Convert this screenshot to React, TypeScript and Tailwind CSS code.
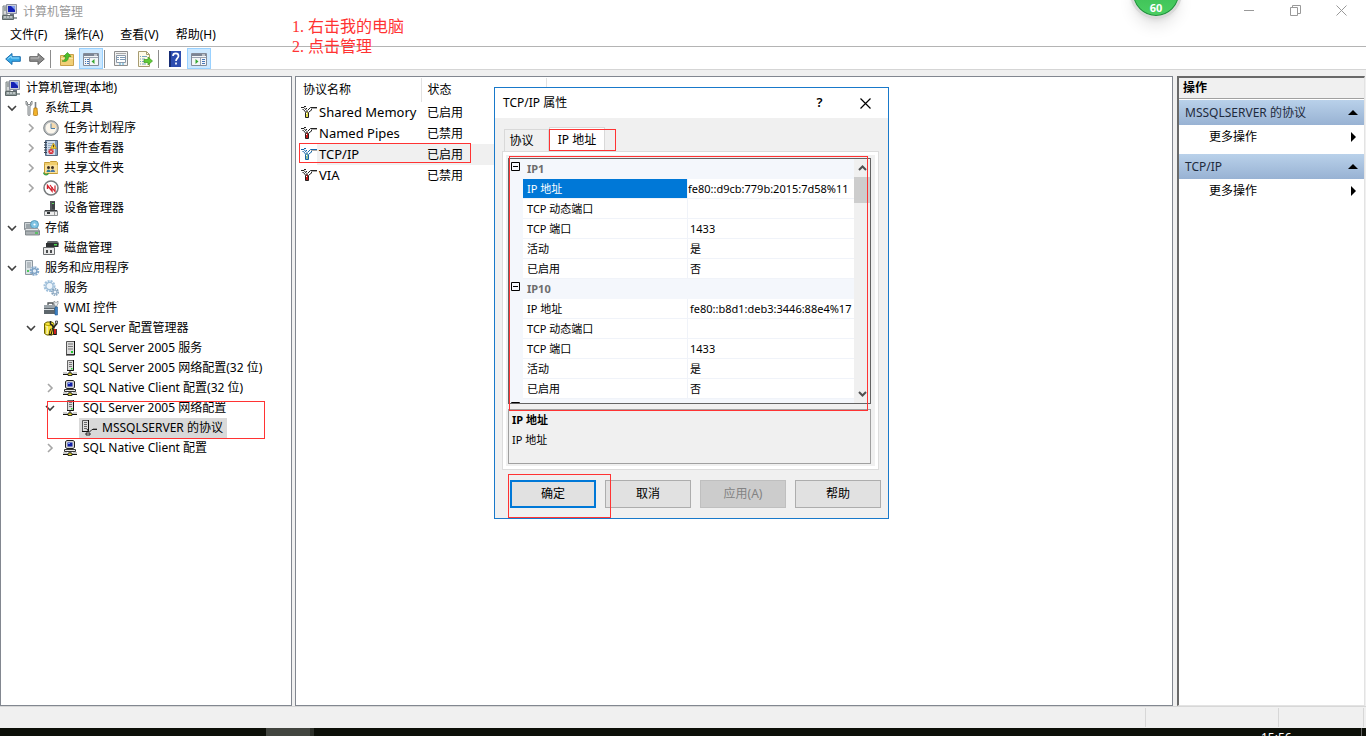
import { Fragment, type ReactNode } from 'react';

type TreeNode = {
  label: string;
  icon: ReactNode;
  state?: 'open' | 'closed';
  selected?: boolean;
  children?: TreeNode[];
};

function Icon({ children }: { children: ReactNode }) {
  return (
    <svg width="16" height="16" viewBox="0 0 16 16" className="shrink-0" aria-hidden="true">
      {children}
    </svg>
  );
}

const ComputerIcon = () => (
  <Icon>
    <path d="M1 2h4v9H1z" fill="#d5d8d8" stroke="#7b8383" />
    <path d="M2 4h2M2 6h2" stroke="#6b7474" />
    <path d="M4.500 .5h10v9h-10z" fill="#c9cdd8" stroke="#8b90a0" />
    <path d="M6 2h7v6H6z" fill="#1420b4" />
    <path d="M9 2h4v4z" fill="#7d9cf0" />
    <path d="M8 10h4v2H8z" fill="#6c7484" />
    <path d="M.5 11.500h11v4H.5z" fill="#8f9a9a" stroke="#5d6868" />
    <path d="M2 13h2M5 13h2M8 13h2" stroke="#e6ecec" />
    <path d="M12 13h3v2h-3z" fill="#9aa4a4" />
  </Icon>
);

const ToolsIcon = () => (
  <Icon>
    <path d="M2 1v3.500L4 6v8.500a1 1 0 0 0 2 0V6l2-1.500V1L6.500 2.500v2h-3v-2z" fill="#e1e4e6" stroke="#75797c" strokeWidth=".9" />
    <path d="M11.500 2v6" stroke="#7b7f82" strokeWidth="1.600" />
    <path d="M10 8h3l.6 6.500a1 1 0 0 1-1 1h-2.200a1 1 0 0 1-1-1z" fill="#f3b32c" stroke="#b07a14" strokeWidth=".8" />
  </Icon>
);

const ClockIcon = () => (
  <Icon>
    <circle cx="8" cy="8" r="7.300" fill="#b9bdbf" stroke="#74797c" strokeWidth=".9" />
    <circle cx="8" cy="8" r="5.500" fill="#fbf6ec" />
    <path d="M8 8V2.500A5.500 5.500 0 0 1 13.500 8z" fill="#f4d9ad" />
    <path d="M8 3.500V8.500h4" fill="none" stroke="#4f7fa8" />
  </Icon>
);

const EventIcon = () => (
  <Icon>
    <path d="M2.500 .5h12v15h-12z" fill="#7f9bbd" stroke="#54677f" />
    <path d="M4 1h8v14H4z" fill="#d0dcea" />
    <path d="M5 3.500h6M5 5.500h6M5 7.500h6M5 9.500h6" stroke="#8aa2be" strokeWidth=".8" />
    <path d="M1 2.500h3M1 5h3M1 7.500h3M1 10h3M1 12.500h3" stroke="#3b4654" />
    <path d="M10.500 3 13.500 8.500H7.500z" fill="#f8cf2d" stroke="#b58b0c" strokeWidth=".6" />
    <path d="M10.500 4.800v2.500" stroke="#222" strokeWidth=".8" />
    <circle cx="8" cy="11.500" r="2.600" fill="#d62b35" />
    <path d="m7 10.500 2 2m0-2-2 2" stroke="#fff" strokeWidth=".8" />
  </Icon>
);

const SharedFolderIcon = () => (
  <Icon>
    <path d="M1.500 3.500v-1h5l1-1h6l1 1v11h-13z" fill="#f0cd6c" stroke="#c59b34" />
    <path d="M2 5h12.500v8H2z" fill="#f9e09a" />
    <circle cx="5.500" cy="7.500" r="1.500" fill="#3e2f24" />
    <circle cx="9.500" cy="7.500" r="1.500" fill="#3e2f24" />
    <path d="M3.500 12c0-3.500 4-3.500 4 0z" fill="#2d7f9e" />
    <path d="M7.500 12c0-3.500 4.500-3.500 4.500 0z" fill="#4a78a8" />
    <path d="M.5 12.500c1 3 4 3 5 .5" fill="none" stroke="#43a047" strokeWidth="1.500" />
  </Icon>
);

const PerformanceIcon = () => (
  <Icon>
    <circle cx="8" cy="8" r="7" fill="#fff" stroke="#777b7d" strokeWidth="1.500" />
    <path d="M4.500 9V5.500L9 11V7" fill="none" stroke="#d3232e" strokeWidth="1.400" />
    <path d="M7 5l5 6.500V5.500" fill="none" stroke="#d3232e" strokeWidth="1.200" />
  </Icon>
);

const DeviceIcon = () => (
  <Icon>
    <path d="M7 1h5v9H7z" fill="#53585b" />
    <path d="M9 2h3v7H9z" fill="#3d4144" />
    <path d="M9 3h2v1H9z" fill="#5cd65c" />
    <path d="M2 10h12l1 2H1z" fill="#3a3c3e" />
    <path d="M1.500 11.500h13v4h-13z" fill="#ededed" stroke="#8b8e90" />
    <path d="M4 12h3v2H4z" fill="#2d3032" />
    <path d="M11 12h1v3h-1z" fill="#999" />
  </Icon>
);

const StorageIcon = () => (
  <Icon>
    <path d="M.5 2.500h9v7h-9z" fill="#cdd3d6" stroke="#878f94" />
    <path d="M2 4h5v4H2z" fill="#9ca5aa" />
    <circle cx="10.500" cy="4.500" r="4" fill="#7fc4e4" stroke="#4990b2" strokeWidth=".8" />
    <circle cx="10.500" cy="4.500" r="1.100" fill="#fff" />
    <path d="M1 8.500h13l1.500 2.500h-14z" fill="#e5e8e9" stroke="#8b9195" strokeWidth=".8" />
    <path d="M1.500 11h14v4h-14z" fill="#a9afb2" stroke="#6f777b" strokeWidth=".8" />
    <path d="M11 13h3" stroke="#3cc648" strokeWidth="1.400" />
  </Icon>
);

const DiskIcon = () => (
  <Icon>
    <path d="m4 2 1-1h9l1.500 1v3H4z" fill="#65696c" />
    <path d="M3 3h12.500v4H3z" fill="#2e3133" />
    <path d="M11 4h3v1.500h-3z" fill="#4ad64f" />
    <path d="M.5 7.500h11v7H.5z" fill="#e9e9e9" stroke="#6b6e70" />
    <path d="M3 10h2v3H3zM7 10h2v3H7z" fill="#4b4e50" />
  </Icon>
);

const ServicesAppsIcon = () => (
  <Icon>
    <path d="M1.500 .5h7v14h-7z" fill="#dbe1e5" stroke="#8d979e" />
    <path d="M3 3h4M3 5h4M3 7h4" stroke="#8d979e" />
    <path d="M3 10h2v2H3z" fill="#4dc95a" />
    <circle cx="10.500" cy="11" r="3.800" fill="none" stroke="#84a9cc" strokeWidth="2" strokeDasharray="2 .9" />
    <circle cx="10.500" cy="11" r="2.400" fill="#e3eef7" stroke="#7a9fc3" strokeWidth="1.200" />
  </Icon>
);

const GearsIcon = () => (
  <Icon>
    <circle cx="6.500" cy="6" r="5" fill="none" stroke="#9fc0dc" strokeWidth="2" strokeDasharray="2 1" />
    <circle cx="6.500" cy="6" r="3.600" fill="#eef5fb" stroke="#9cbcd6" strokeWidth="1.300" />
    <circle cx="12" cy="12" r="3.200" fill="none" stroke="#86a5bf" strokeWidth="1.600" strokeDasharray="1.600 .8" />
    <circle cx="12" cy="12" r="2" fill="#eef5fb" stroke="#7c9cb8" />
  </Icon>
);

const WmiIcon = () => (
  <Icon>
    <path d="M5 5V3h5v2" fill="none" stroke="#4e5356" strokeWidth="1.300" />
    <path d="M1 5h13v9H1z" fill="#5d666c" />
    <path d="M1 5h13v3H1z" fill="#9aa3a9" />
    <path d="M1 9h10v1H1z" fill="#d8dde0" />
    <path d="M11 1v3l1 1v1.500h2V5l1-1V1l-1.200 1.200h-1.600z" fill="#e7eaec" stroke="#777d80" strokeWidth=".6" />
    <path d="M12 7h2.500v8H12z" fill="#3e82c4" stroke="#235a92" strokeWidth=".6" />
  </Icon>
);

const SqlConfigIcon = () => (
  <Icon>
    <path d="M1.500 3.500 4 2h5l2 1.500v10L9 15H4l-2.500-1.500z" fill="#f7e53b" stroke="#6a6200" />
    <path d="M2 4.500c3 1.500 5 1.500 8 0M3 7v6" fill="none" stroke="#b0a20a" />
    <path d="M4 6v8" stroke="#fff" />
    <path d="M7.500 1v3l1.500 1M9 5l2 3" fill="none" stroke="#222" strokeWidth="1.500" />
    <path d="M14 3.500 11 7l-2 2" stroke="#222" strokeWidth="1.600" />
    <path d="M8.500 9 7 15" stroke="#111" strokeWidth="3" />
    <path d="M8.500 9 7 14" stroke="#e8c020" strokeWidth="1.200" />
    <path d="M12 9v6" stroke="#111" strokeWidth="3.600" />
    <path d="M12 9v5" stroke="#e02222" strokeWidth="1.800" />
    <path d="M12.500 1h2v2.500h-2z" fill="#ccc" stroke="#222" strokeWidth=".7" />
  </Icon>
);

const ServerIcon = () => (
  <Icon>
    <path d="M4.500 1.500h8v13h-8z" fill="#dcdcdc" stroke="#555" />
    <path d="M12.500 1v14H4" fill="none" stroke="#111" />
    <path d="M6 4h5M6 6.500h5M6 9h5" stroke="#777" />
    <path d="M9 11h2v2H9z" fill="#1ecb2c" />
  </Icon>
);

const NetServerIcon = () => (
  <Icon>
    <path d="M5.500 .5h6v10h-6z" fill="#dcdcdc" stroke="#666" />
    <path d="M11.500 0v10.500H5" fill="none" stroke="#111" />
    <path d="M7 2.500h3M7 4.500h3M7 6.500h3" stroke="#777" />
    <path d="M9 8h1.500v1.500H9z" fill="#1ecb2c" />
    <path d="M8 11v2M1 14.500h14" stroke="#111" />
    <path d="M1 13h4M11 13h4" stroke="#999" />
    <path d="M6 13h4v2.500H6z" fill="#e8de3a" stroke="#111" strokeWidth=".8" />
  </Icon>
);

const ClientIcon = () => (
  <Icon>
    <path d="M3.500 1.500 5 .5h6l1.500 1v6l-1.500 1H5l-1.500-1z" fill="#d5d5d5" stroke="#222" />
    <path d="M5.500 2.500h5v4h-5z" fill="#1220a8" />
    <path d="M6 3.500h2" stroke="#7fa2ff" />
    <path d="M2.500 9.500h11v2h-11z" fill="#ececec" stroke="#222" strokeWidth=".9" />
    <path d="M8 12v1M1 14.500h14" stroke="#111" />
    <path d="M1 13h4M11 13h4" stroke="#999" />
    <path d="M6 13h4v2.500H6z" fill="#e8de3a" stroke="#111" strokeWidth=".8" />
  </Icon>
);

const ServerProtocolIcon = () => (
  <Icon>
    <path d="M1.500 .5h6v11h-6z" fill="#dcdcdc" stroke="#555" />
    <path d="M7.500 0v11.500H1" fill="none" stroke="#111" />
    <path d="M3 2.500h3M3 4.500h3M3 6.500h3M3 8.500h3" stroke="#666" />
    <path d="M5 13h4v2H5z" fill="#ddd" stroke="#222" />
    <path d="m6 9 2 3M16 9.500h-5L8.500 12" fill="none" stroke="#222" />
    <path d="M12 8.500h4" stroke="#999" />
  </Icon>
);

function ProtocolIcon({ tone, lamp }: { tone: string; lamp: string }) {
  return (
    <Icon>
      <path d="M0 2.500h3l2.500 3M16 2.500H9.500L6.500 5.500M1.500 4.500h1l2 2.500M10 4.500h1L8 7" fill="none" stroke={tone} />
      <path d="M3 1.500h2M5 3.500h1" stroke={tone} />
      <path d="M10 3.500h6" stroke="#aaa" />
      <path d="M4.500 7.500 6 6.500l1.500 1v5h-3z" fill={lamp} stroke={tone} />
      <path d="M5 8.500h1" stroke="#fff" />
    </Icon>
  );
}

function Chevron({ open }: { open: boolean }) {
  return (
    <svg width="10" height="10" viewBox="0 0 10 10" fill="none" aria-hidden="true">
      {open ? (
        <path d="m1 3 4 4 4-4" stroke="#404040" strokeWidth="1.600" />
      ) : (
        <path d="m3 1 4 4-4 4" stroke="#a6a6a6" strokeWidth="1.600" />
      )}
    </svg>
  );
}

const tree: TreeNode[] = [
  {
    label: '系统工具',
    icon: <ToolsIcon />,
    state: 'open',
    children: [
      { label: '任务计划程序', icon: <ClockIcon />, state: 'closed' },
      { label: '事件查看器', icon: <EventIcon />, state: 'closed' },
      { label: '共享文件夹', icon: <SharedFolderIcon />, state: 'closed' },
      { label: '性能', icon: <PerformanceIcon />, state: 'closed' },
      { label: '设备管理器', icon: <DeviceIcon /> },
    ],
  },
  {
    label: '存储',
    icon: <StorageIcon />,
    state: 'open',
    children: [{ label: '磁盘管理', icon: <DiskIcon /> }],
  },
  {
    label: '服务和应用程序',
    icon: <ServicesAppsIcon />,
    state: 'open',
    children: [
      { label: '服务', icon: <GearsIcon /> },
      { label: 'WMI 控件', icon: <WmiIcon /> },
      {
        label: 'SQL Server 配置管理器',
        icon: <SqlConfigIcon />,
        state: 'open',
        children: [
          { label: 'SQL Server 2005 服务', icon: <ServerIcon /> },
          { label: 'SQL Server 2005 网络配置(32 位)', icon: <NetServerIcon /> },
          { label: 'SQL Native Client 配置(32 位)', icon: <ClientIcon />, state: 'closed' },
          {
            label: 'SQL Server 2005 网络配置',
            icon: <NetServerIcon />,
            state: 'open',
            children: [{ label: 'MSSQLSERVER 的协议', icon: <ServerProtocolIcon />, selected: true }],
          },
          { label: 'SQL Native Client 配置', icon: <ClientIcon />, state: 'closed' },
        ],
      },
    ],
  },
];

const protocols = [
  { name: 'Shared Memory', status: '已启用', lamp: '#e6e04a', tone: '#222' },
  { name: 'Named Pipes', status: '已禁用', lamp: '#c41818', tone: '#222' },
  { name: 'TCP/IP', status: '已启用', lamp: '#8fbf9a', tone: '#1467a8', selected: true },
  { name: 'VIA', status: '已禁用', lamp: '#c41818', tone: '#222' },
];

const addressGroups = [
  {
    name: 'IP1',
    rows: [
      ['IP 地址', 'fe80::d9cb:779b:2015:7d58%11'],
      ['TCP 动态端口', ''],
      ['TCP 端口', '1433'],
      ['活动', '是'],
      ['已启用', '否'],
    ],
  },
  {
    name: 'IP10',
    rows: [
      ['IP 地址', 'fe80::b8d1:deb3:3446:88e4%17'],
      ['TCP 动态端口', ''],
      ['TCP 端口', '1433'],
      ['活动', '是'],
      ['已启用', '否'],
    ],
  },
  { name: '', rows: [] },
];

function TreeList({ nodes, nested }: { nodes: TreeNode[]; nested?: boolean }) {
  return (
    <ul className={nested ? 'pl-[19px]' : ''}>
      {nodes.map((node) => (
        <li key={node.label}>
          <div className="flex h-5 items-center">
            <span className="w-[17px] shrink-0 pl-0.5">
              {node.state && <Chevron open={node.state === 'open'} />}
            </span>
            <span className={`flex h-5 items-center gap-[5px] px-0.5 ${node.selected ? 'bg-[#d9d9d9] pr-1' : ''}`}>
              {node.icon}
              {node.label}
            </span>
          </div>
          {node.children && <TreeList nodes={node.children} nested />}
        </li>
      ))}
    </ul>
  );
}

function TitleBar() {
  return (
    <header className="flex h-6 items-start justify-between bg-white">
      <div className="flex h-6 items-center gap-[5px] pl-0.5 text-[#999]">
        <ComputerIcon />
        计算机管理
      </div>
      <div className="flex pr-0.5">
        <button aria-label="最小化" className="flex h-5 w-[46px] items-center justify-center">
          <svg width="11" height="11" fill="none" stroke="#999"><path d="M0 5.500h10" /></svg>
        </button>
        <button aria-label="还原" className="flex h-5 w-[46px] items-center justify-center">
          <svg width="11" height="11" fill="none" stroke="#999"><path d="M.5 2.500h7v8h-7zM2.500 2.500v-2h8v8h-3" /></svg>
        </button>
        <button aria-label="关闭" className="flex h-5 w-[46px] items-center justify-center">
          <svg width="11" height="11" fill="none" stroke="#999"><path d="m.5 .5 10 10m0-10-10 10" /></svg>
        </button>
      </div>
    </header>
  );
}

function Separator() {
  return <span className="ml-px mr-1 h-[18px] w-px bg-[#8c8c8c]" />;
}

function ToolButton({ label, active, children }: { label: string; active?: boolean; children: ReactNode }) {
  return (
    <button
      aria-label={label}
      className={`flex h-[21px] w-6 items-center justify-center border ${active ? 'border-[#99d1ff] bg-[#cce8ff]' : 'border-transparent'}`}
    >
      <Icon>{children}</Icon>
    </button>
  );
}

function Toolbar() {
  return (
    <div className="flex h-[23px] items-center border-b border-[#d5d5d5] bg-white pl-px pt-px">
      <ToolButton label="后退">
        <path d="M.7 8 7 2.500v3.200h8.300v4.600H7v3.200z" fill="#36a8e6" stroke="#1c6fae" />
        <path d="m2.500 8 3.700-3v2h8" fill="none" stroke="#98dbfb" />
      </ToolButton>
      <ToolButton label="前进">
        <path d="M15.300 8 9 2.500v3.200H.7v4.600H9v3.200z" fill="#8d8d8d" stroke="#626262" />
        <path d="M1.500 7h8.300V5" fill="none" stroke="#bdbdbd" />
      </ToolButton>
      <Separator />
      <ToolButton label="向上">
        <path d="M1.500 4.500h5l1.500-1h6.500v11h-13z" fill="#f1cf76" stroke="#c9a04a" />
        <path d="M2 7h12v1H2z" fill="#f9e6aa" />
        <path d="M3 10c2.500 0 3.500-2 3.500-4.500H4.500L8.500 1.500 12 5.500H9.500C9.500 9.500 7 11.500 3 10z" fill="#4cc02c" stroke="#2b8a17" strokeWidth=".6" />
      </ToolButton>
      <ToolButton label="显示/隐藏控制台树" active>
        <path d="M.5 2.500h15v12H.5z" fill="#f4f6f8" stroke="#848b98" />
        <path d="M1 3h14v2H1z" fill="#7b8494" />
        <path d="M11 4h3" stroke="#fff" />
        <path d="M1 6.500h14M6.500 7v7" stroke="#9aa2b0" />
        <path d="M2 8.500h1M2 10.500h1M2 12.500h1M4 8.500h2M4 10.500h2M4 12.500h2" stroke="#4777b8" />
        <path d="M11.500 8v5L8.500 10.500z" fill="#36a832" />
      </ToolButton>
      <Separator />
      <ToolButton label="属性">
        <path d="M1.500 .5h13v14h-13z" fill="#f2f2f2" stroke="#8d8d8d" />
        <path d="M3.500 4.500h9v7h-9z" fill="#fff" stroke="#8d9baa" />
        <path d="M3 2.500h10" stroke="#a7a7a7" />
        <path d="M4 6.500h2M7 6.500h5M4 8.500h2M7 8.500h5" stroke="#7c9ab7" />
        <path d="M6 13h2M9 13h2" stroke="#48a8d8" />
      </ToolButton>
      <ToolButton label="导出列表">
        <path d="M1.500 .5h8l3 3v12h-11z" fill="#fffbe8" stroke="#a79c72" />
        <path d="M9.500 .5v3h3" fill="none" stroke="#a79c72" />
        <path d="M3 5.500h1M5 5.500h5M3 8h1M5 8h3M3 10.500h1M5 10.500h3M3 13h1M5 13h4" stroke="#77a4c0" />
        <path d="M7 8.500h4V6l4.500 4-4.500 4v-2.500H7z" fill="#62cc38" stroke="#3b9a1c" strokeWidth=".7" />
      </ToolButton>
      <Separator />
      <ToolButton label="帮助">
        <path d="M2 0h12v16H2z" fill="#2c4cae" />
        <path d="M2 0h2v16H2z" fill="#162c74" />
        <path d="M6 5c0-3.500 5.500-3.500 5.500 0 0 2-2.500 2.200-2.500 5M9 11.500v2" fill="none" stroke="#fff" strokeWidth="1.700" />
      </ToolButton>
      <ToolButton label="显示/隐藏操作窗格" active>
        <path d="M.5 2.500h15v12H.5z" fill="#f4f6f8" stroke="#848b98" />
        <path d="M1 3h14v2H1z" fill="#7b8494" />
        <path d="M11 4h3" stroke="#fff" />
        <path d="M1 6.500h14M9.500 7v7" stroke="#9aa2b0" />
        <path d="M11 8.500h3M11 10.500h3M11 12.500h3" stroke="#4777b8" />
        <path d="M4.500 8v5l3-2.500z" fill="#36a832" />
      </ToolButton>
    </div>
  );
}

function ProtocolList() {
  return (
    <section className="min-w-0 flex-1 border border-[#828790] bg-white p-px">
      <table className="w-[249px] table-fixed text-left">
        <thead>
          <tr className="h-6">
            <th className="w-[124px] border-r border-[#e2e2e2] pl-1.5 font-normal">协议名称</th>
            <th className="w-[125px] border-r border-[#e2e2e2] pl-1.5 font-normal">状态</th>
          </tr>
        </thead>
        <tbody>
          {protocols.map((p) => (
            <tr key={p.name} className="h-[21px]">
              <td className="relative p-0">
                <div className="flex h-[21px] items-center pl-1">
                  <ProtocolIcon tone={p.tone} lamp={p.lamp} />
                  <span className={`flex h-[21px] flex-1 items-center pl-0.5 text-[13px] ${p.selected ? 'bg-[#f0f0f0]' : ''}`}>{p.name}</span>
                </div>
                {p.selected && <span className="pointer-events-none absolute -top-px left-0.5 h-5 w-[172px] border border-[#f33]" />}
              </td>
              <td className={`py-0 pl-1.5 pr-0 ${p.selected ? 'bg-[#f0f0f0]' : ''}`}>{p.status}</td>
            </tr>
          ))}
        </tbody>
      </table>
    </section>
  );
}

function ActionsPane() {
  return (
    <aside className="flex w-[188px] flex-col border-2 border-b-[#e3e3e3] border-l-[#696969] border-r-[#e3e3e3] border-t-[#696969] border-b border-r bg-white">
      <h2 className="mb-px h-[21px] border-b border-[#a0a0a0] bg-[#f0f0f0] pl-1 font-bold leading-5">操作</h2>
      {['MSSQLSERVER 的协议', 'TCP/IP'].map((title) => (
        <div key={title} className="mb-[5px]">
          <h3 className="flex h-[25px] items-center justify-between bg-linear-to-b from-[#b9d1ea] to-[#98b2d3] pl-1.5 pr-1.5 text-[#1e2a3c]">
            {title}
            <svg width="10" height="5" className="fill-black"><path d="M0 5h10L5 0z" /></svg>
          </h3>
          <button className="flex h-6 w-full items-center justify-between pl-[30px] pr-2">
            更多操作
            <svg width="5" height="10" className="fill-black"><path d="M0 0v10l5-5z" /></svg>
          </button>
        </div>
      ))}
    </aside>
  );
}

function PropertyGrid() {
  return (
    <div className="flex h-[246px] overflow-hidden border border-[#646464] bg-white text-[11px]">
      <div className="min-w-0 flex-1 overflow-hidden">
        <table className="w-full table-fixed border-separate border-spacing-0 text-left">
          <colgroup>
            <col className="w-[14px]" />
            <col className="w-[165px]" />
            <col />
          </colgroup>
          <tbody>
            {addressGroups.map((group, g) => (
              <Fragment key={group.name}>
                <tr className="h-5 bg-[#f4f7fc]">
                  <td className="p-0 pl-0.5 align-top">
                    <svg width="9" height="16" fill="none" stroke="#000" className="block"><path d="M.5 3.500h8v8h-8zM2 7.500h5" /></svg>
                  </td>
                  <th colSpan={2} className="p-0 pl-1 font-bold leading-5 text-[#6d6d6d]">{group.name}</th>
                </tr>
                {group.rows.map(([name, value], i) => {
                  const selected = g === 0 && i === 0;
                  return (
                    <tr key={name} className="h-5">
                      <td className="bg-[#f4f7fc] p-0" />
                      <td className={`border-b border-r border-[#f0f3f9] p-0 pl-1 leading-[19px] ${selected ? 'bg-[#0078d7] text-white' : ''}`}>{name}</td>
                      <td className="overflow-hidden whitespace-nowrap border-b border-[#f0f3f9] p-0 leading-[19px]">
                        {selected ? (
                          <input aria-label={name} defaultValue={value} className="block h-[19px] w-full outline-none" />
                        ) : (
                          <span className="pl-0.5">{value}</span>
                        )}
                      </td>
                    </tr>
                  );
                })}
              </Fragment>
            ))}
          </tbody>
        </table>
      </div>
      <div className="flex w-4 flex-col bg-[#f0f0f0]">
        <button aria-label="向上滚动" className="flex h-[18px] items-center justify-center">
          <svg width="9" height="6" fill="none" stroke="#505050" strokeWidth="2"><path d="m1 5 3.500-3.500L8 5" /></svg>
        </button>
        <div className="h-[26px] bg-[#cdcdcd]" />
        <button aria-label="向下滚动" className="mt-auto flex h-[18px] items-center justify-center">
          <svg width="9" height="6" fill="none" stroke="#505050" strokeWidth="2"><path d="m1 1 3.500 3.500L8 1" /></svg>
        </button>
      </div>
    </div>
  );
}

function PropertiesDialog() {
  const plain = 'h-7 w-[86px] border border-[#adadad] bg-[#e1e1e1]';
  return (
    <div role="dialog" aria-label="TCP/IP 属性" className="absolute left-[494px] top-[87px] w-[395px] border border-[#1979ca] bg-[#f0f0f0]">
      <div className="flex h-[30px] items-center bg-white pl-2">
        <h2 className="flex-1">TCP/IP 属性</h2>
        <button aria-label="帮助" className="w-[45px] text-center text-[13px] font-semibold">?</button>
        <button aria-label="关闭" className="flex w-[46px] justify-center">
          <svg width="11" height="11" fill="none" stroke="#000" strokeWidth="1.200"><path d="m.5 .5 10 10m0-10-10 10" /></svg>
        </button>
      </div>

      <div className="px-[7px] pt-[9px]">
        <div role="tablist" className="relative flex items-end pl-0.5">
          <button role="tab" aria-selected="false" className="h-[22px] w-[45px] border border-b-0 border-[#d9d9d9] pr-2.5">协议</button>
          <button role="tab" aria-selected="true" className="h-6 w-14 border border-b-0 border-[#d9d9d9] bg-white">IP 地址</button>
          <span className="pointer-events-none absolute left-[47px] top-0.5 h-[22px] w-[67px] border border-[#f33]" />
        </div>
        <div className="mr-0.5 border border-[#dcdcdc] bg-white p-[3px]">
          <div className="relative flex flex-col gap-[5px] bg-[#f0f0f0] pb-0.5 pl-0.5 pr-1 pt-[3px]">
            <PropertyGrid />
            <div className="h-[55px] border border-[#a0a0a0] px-[3px] text-[11px] leading-5">
              <p className="font-bold">IP 地址</p>
              <p>IP 地址</p>
            </div>
            <span className="pointer-events-none absolute left-[3px] top-px h-[255px] w-[359px] border border-[#f33]" />
          </div>
        </div>
      </div>

      <div className="relative flex justify-end gap-[9px] pb-2.5 pr-[7px] pt-2.5">
        <button className="h-7 w-[86px] border-2 border-[#0078d7] bg-[#e1e1e1]">确定</button>
        <button className={plain}>取消</button>
        <button disabled className="h-7 w-[86px] border border-[#bfbfbf] bg-[#ccc] text-[#838383]">应用(A)</button>
        <button className={plain}>帮助</button>
        <span className="pointer-events-none absolute bottom-0 left-[13px] h-11 w-[103px] border border-[#f33]" />
      </div>
    </div>
  );
}

function App() {
  return (
    <div className="relative flex h-screen flex-col overflow-hidden bg-[#f0f0f0] font-['Noto_Sans','Noto_Sans_CJK_SC',sans-serif] text-xs text-black">
      <TitleBar />
      <nav className="flex h-[23px] items-center gap-px border-b border-[#b4b4b4] bg-white pl-0.5">
        {['文件(F)', '操作(A)', '查看(V)', '帮助(H)'].map((item) => (
          <button key={item} className="px-2">{item}</button>
        ))}
      </nav>
      <Toolbar />

      <main className="flex min-h-0 flex-1 pr-px pt-1.5">
        <section className="relative mr-[3px] w-[292px] overflow-hidden whitespace-nowrap border border-[#828790] bg-white pl-1 pt-px">
          <div className="flex h-5 items-center gap-[5px]">
            <ComputerIcon />
            计算机管理(本地)
          </div>
          <TreeList nodes={tree} />
          <span className="pointer-events-none absolute left-[46px] top-[324px] h-[38px] w-[218px] border border-[#f33]" />
        </section>
        <ProtocolList />
        <div className="w-1" />
        <ActionsPane />
      </main>

      <footer className="flex h-[22px] justify-end border-t border-[#d7d7d7] py-px pr-0.5">
        <span className="w-[133px] border-l border-[#d7d7d7]" />
        <span className="w-[86px] border-l border-r border-[#d7d7d7]" />
      </footer>
      <div className="flex h-2 justify-between overflow-hidden bg-[#0c0f08]">
        <span className="ml-[266px] w-12 border-r-4 border-[#2c2f28] bg-[#42453f]" />
        <time className="mr-1 w-[101px] border-r border-[#666] pt-0.5 text-white">15:56</time>
      </div>

      <p className="absolute left-[292px] top-[17px] font-['Liberation_Serif','Noto_Sans_CJK_SC',serif] text-base leading-5 text-[#f33]">
        1. 右击我的电脑
        <br />
        2. 点击管理
      </p>

      <div className="absolute -top-[33px] left-[1130px] flex size-[52px] items-end justify-center rounded-full border-[3px] border-[#d9d9d9] bg-linear-to-b from-[#2fb14b] to-[#4bd062] pb-[3px] text-[11px] font-bold leading-none text-white shadow-lg inset-ring inset-ring-[#1f8a3c]">
        60
      </div>

      <PropertiesDialog />
    </div>
  );
}

export default App;
